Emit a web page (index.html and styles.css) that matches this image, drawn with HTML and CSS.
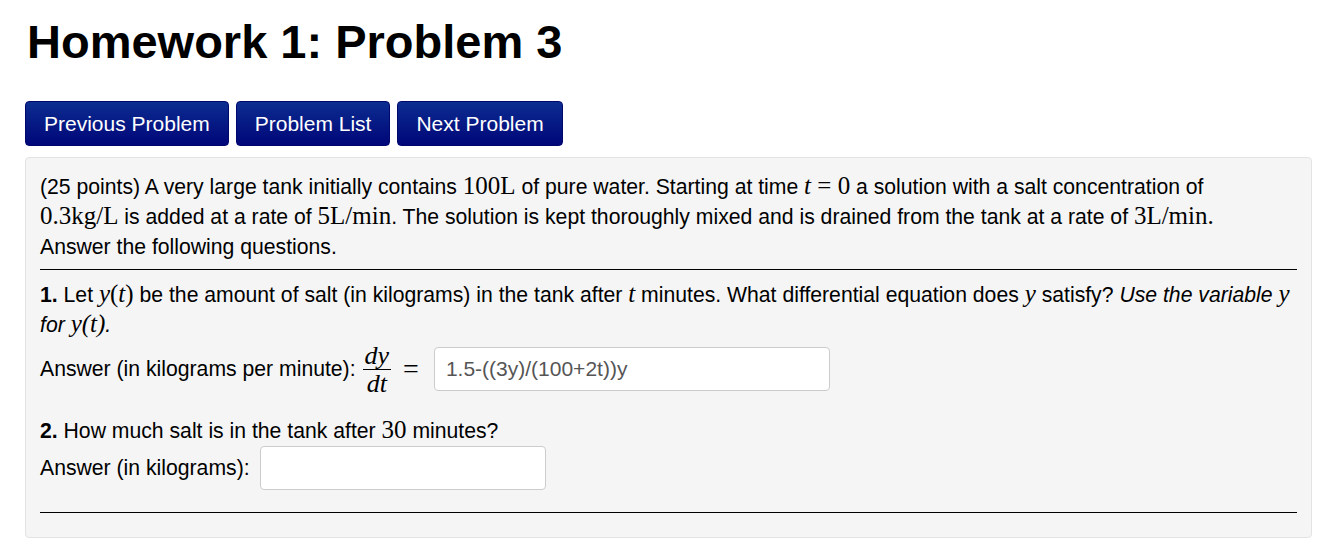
FILE: index.html
```html
<!DOCTYPE html>
<html lang="en">
<head>
    <meta charset="UTF-8">
    <title>Homework 1: Problem 3</title>
    <link rel="stylesheet" href="styles.css">
</head>
<body>
    <h1 class="page-title">Homework 1: Problem 3</h1>

    <div class="nav-buttons">
        <a class="nav-btn" href="#">Previous Problem</a>
        <a class="nav-btn" href="#">Problem List</a>
        <a class="nav-btn" href="#">Next Problem</a>
    </div>

    <div class="problem">
        <p class="intro">
            (25 points) A very large tank initially contains <span class="m">100L</span> of pure water. Starting at time <span class="m"><i>t</i> = 0</span> a solution with a salt concentration of<br>
            <span class="m">0.3kg/L</span> is added at a rate of <span class="m">5L/min</span>. The solution is kept thoroughly mixed and is drained from the tank at a rate of <span class="m">3L/min.</span><br>
            Answer the following questions.
        </p>
        <hr class="rule">

        <p class="question">
            <b>1.</b> Let <span class="m"><i>y</i>(<i>t</i>)</span> be the amount of salt (in kilograms) in the tank after <span class="m"><i>t</i></span> minutes. What differential equation does <span class="m"><i>y</i></span> satisfy? <em>Use the variable <span class="m"><i>y</i></span><br>
            for <span class="m"><i>y</i>(<i>t</i>)</span>.</em>
        </p>
        <div class="answer-row first">
            <span>Answer (in kilograms per minute):</span>
            <span class="frac m"><span class="num"><i>dy</i></span><span class="den"><i>dt</i></span></span>
            <span class="m eq">=</span>
            <input class="answer wide" type="text" value="1.5-((3y)/(100+2t))y">
        </div>

        <p class="question q2">
            <b>2.</b> How much salt is in the tank after <span class="m">30</span> minutes?
        </p>
        <div class="answer-row">
            <span>Answer (in kilograms):</span>
            <input class="answer" type="text">
        </div>
        <hr class="rule bottom">
    </div>
</body>
</html>
```

FILE: styles.css
```css
body {
    margin: 0;
    padding: 0 25px;
    font-family: "Liberation Sans", Arial, sans-serif;
    color: #000;
    background: #fff;
}
.page-title {
    font-size: 47px;
    font-weight: bold;
    margin: 0;
    padding: 13px 0 0 2px;
    line-height: 58px;
}
.nav-buttons {
    display: flex;
    gap: 7px;
    margin-top: 30px;
}
.nav-btn {
    display: block;
    height: 45px;
    line-height: 43px;
    padding: 0 18px;
    font-size: 21px;
    color: #fff;
    text-decoration: none;
    border-radius: 4px;
    background: linear-gradient(#0c2d90, #000679);
    border: 1px solid #00086e;
    box-sizing: border-box;
}
.problem {
    margin-top: 11px;
    width: 1287px;
    box-sizing: border-box;
    background: #f5f5f5;
    border: 1px solid #e3e3e3;
    border-radius: 4px;
    padding: 14px 14px 24px 14px;
    font-size: 21.2px;
    line-height: 30px;
}
.problem p {
    margin: 0;
}
.m {
    font-family: "Liberation Serif", "Times New Roman", serif;
    font-size: 25px;
    line-height: 1;
}
.rule {
    border: 0;
    border-top: 1px solid #000;
    margin: 7px 0 10px;
}
.rule.bottom {
    margin: 22px 0 0;
}
.answer-row {
    display: flex;
    align-items: center;
}
.answer-row.first {
    height: 58px;
}
.frac {
    display: inline-flex;
    flex-direction: column;
    align-items: center;
    margin-left: 7px;
    line-height: 27px;
    font-size: 26px;
}
.frac .num {
    border-bottom: 1px solid #000;
    padding: 0 2px;
}
.eq {
    margin: 0 15px 0 12px;
    font-size: 28px;
}
.answer {
    height: 44px;
    width: 286px;
    box-sizing: border-box;
    border: 1px solid #ccc;
    border-radius: 4px;
    background: #fff;
    padding: 0 11px;
    font-family: "Liberation Sans", Arial, sans-serif;
    font-size: 21px;
    color: #555;
    margin-left: 10px;
}
.answer.wide {
    width: 396px;
    margin-left: 0;
}
.q2 {
    margin-top: 18px !important;
}
```
